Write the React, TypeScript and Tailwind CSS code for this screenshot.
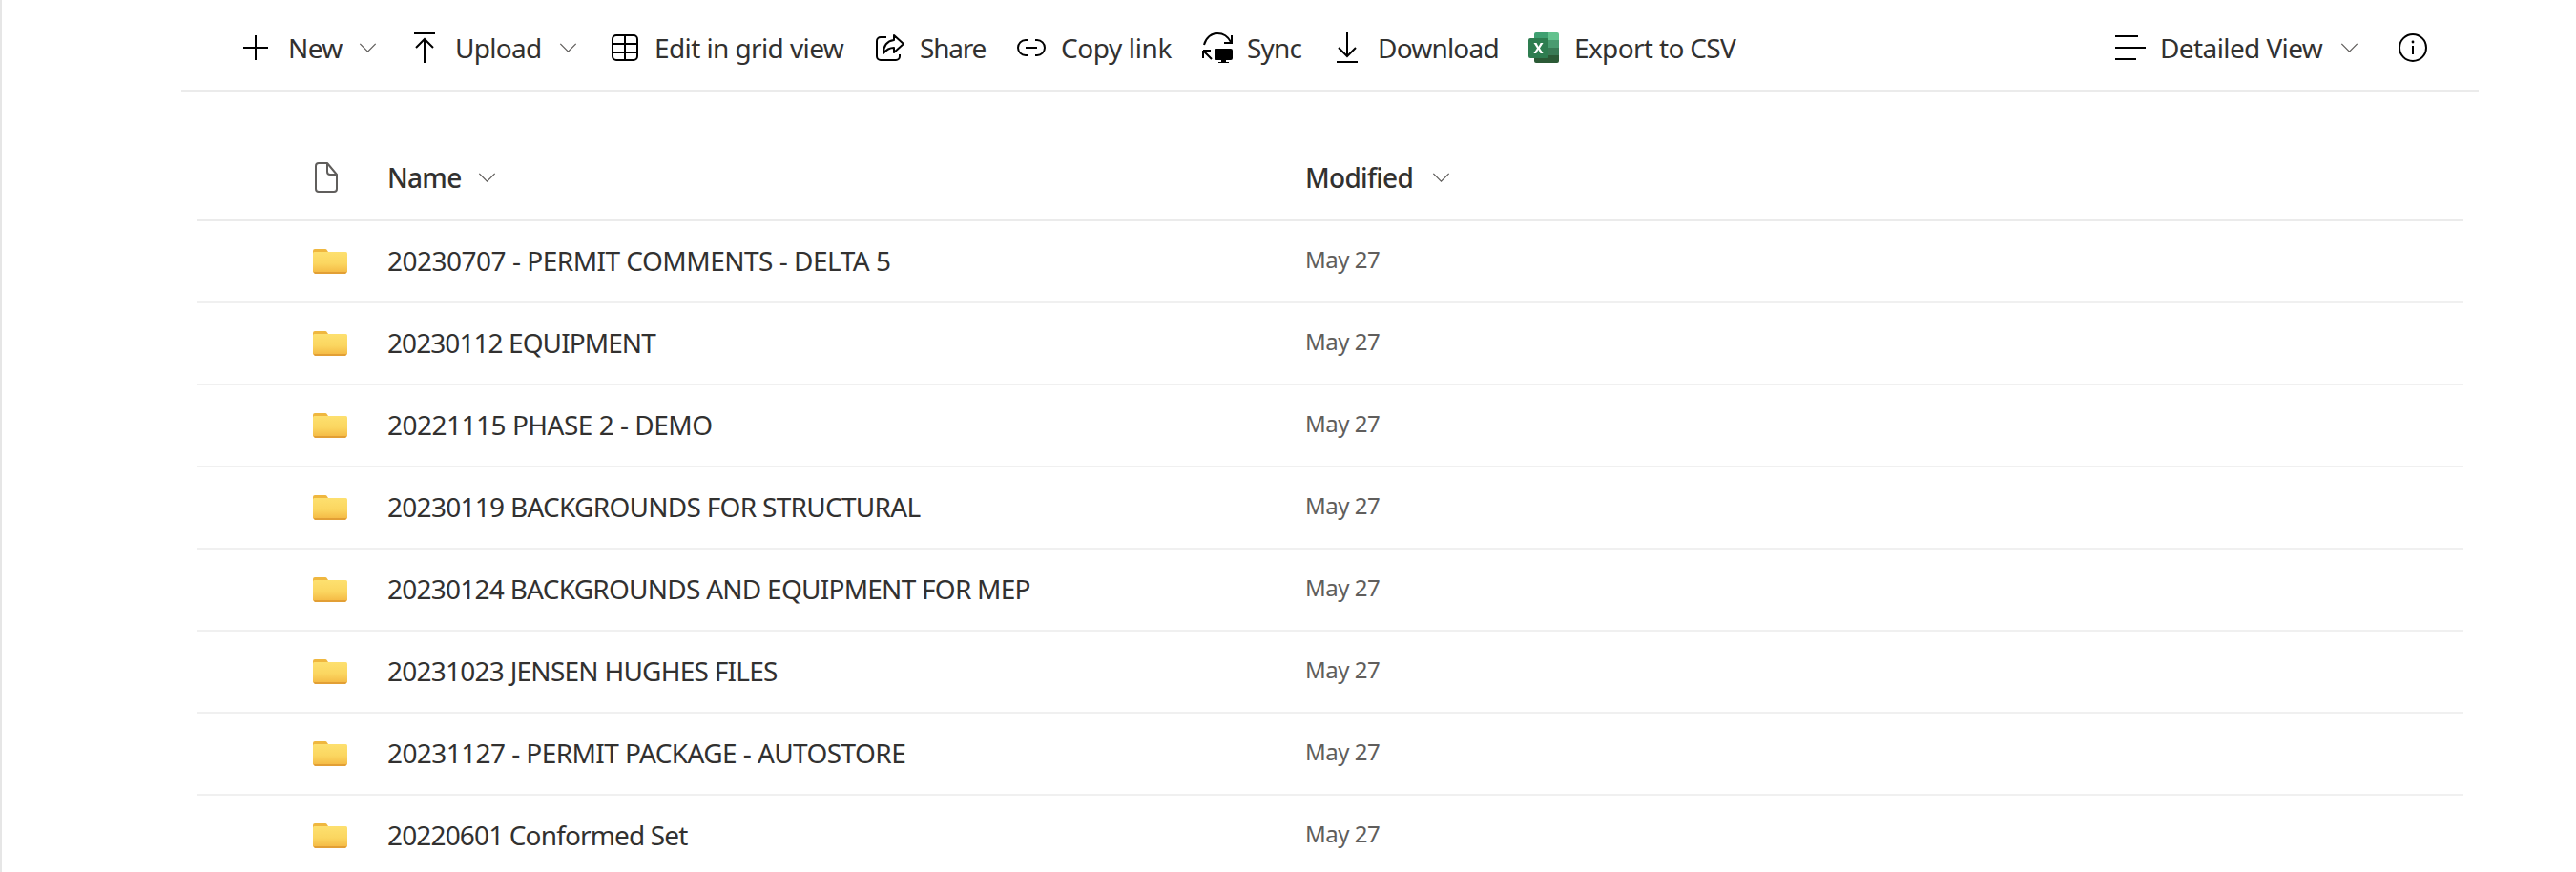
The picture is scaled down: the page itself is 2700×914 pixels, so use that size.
import type { ReactNode } from 'react'

const folders = [
  { name: '20230707 - PERMIT COMMENTS - DELTA 5', tracking: 'tracking-[-0.5px]' },
  { name: '20230112 EQUIPMENT', tracking: 'tracking-[-0.93px]' },
  { name: '20221115 PHASE 2 - DEMO', tracking: 'tracking-[-0.5px]' },
  { name: '20230119 BACKGROUNDS FOR STRUCTURAL', tracking: 'tracking-[-0.72px]' },
  { name: '20230124 BACKGROUNDS AND EQUIPMENT FOR MEP', tracking: 'tracking-[-0.75px]' },
  { name: '20231023 JENSEN HUGHES FILES', tracking: 'tracking-[-0.75px]' },
  { name: '20231127 - PERMIT PACKAGE - AUTOSTORE', tracking: 'tracking-[-0.58px]' },
  { name: '20220601 Conformed Set', tracking: 'tracking-[-0.85px]' },
]

function Chevron({ className }: { className: string }) {
  return (
    <svg viewBox="0 0 20 11" className={className} fill="none" stroke="#605e5c" strokeWidth="1.4">
      <path d="M1 1l9 9 9-9" />
    </svg>
  )
}

function PlusIcon() {
  return (
    <svg viewBox="0 0 26 26" className="h-[26px] w-[26px]" stroke="#000" strokeWidth="2">
      <path d="M13 0v26M0 13h26" />
    </svg>
  )
}

function UploadIcon() {
  return (
    <svg viewBox="0 0 22 32" className="h-[32px] w-[22px]" fill="none" stroke="#000" strokeWidth="2">
      <path d="M0 1h22M11 32V7M2 16l9-9 9 9" />
    </svg>
  )
}

function GridIcon() {
  return (
    <svg viewBox="0 0 28 28" className="h-[28px] w-[28px]" fill="none" stroke="#000" strokeWidth="2">
      <rect x="1" y="1" width="26" height="26" rx="4" />
      <path d="M1 10h26M1 19h26M14 1v26" />
    </svg>
  )
}

function ShareIcon() {
  return (
    <svg viewBox="0 0 30 28" className="h-[28px] w-[30px]" fill="none" stroke="#000" strokeWidth="2">
      <path d="M11 3H5a4 4 0 0 0-4 4v16a4 4 0 0 0 4 4h16a4 4 0 0 0 4-4v-2" />
      <path d="M19 1l10 9-10 9v-5c-5 0-8 2-11 6 0-8 4-13 11-14z" strokeLinejoin="round" />
    </svg>
  )
}

function LinkIcon() {
  return (
    <svg viewBox="0 0 30 18" className="h-[18px] w-[30px]" fill="none" stroke="#000" strokeWidth="2">
      <path d="M11 1H9a8 8 0 0 0 0 16h2M19 1h2a8 8 0 0 1 0 16h-2M9 9h12" />
    </svg>
  )
}

function SyncIcon() {
  return (
    <svg viewBox="0 0 32 32" className="h-[32px] w-[32px]" fill="none" stroke="#000" strokeWidth="2">
      <path d="M2 13C4 5 10 1 16 1c6 0 11 3 14 9" />
      <path d="M31 3v8h-8" />
      <path d="M1 19v8M1 19h8M1 19l9 9" />
      <rect x="13" y="17" width="19" height="12" rx="2" fill="#000" stroke="none" />
      <path d="M20 28h5v3h3v1H17v-1h3z" fill="#000" stroke="none" />
    </svg>
  )
}

function DownloadIcon() {
  return (
    <svg viewBox="0 0 22 32" className="h-[32px] w-[22px]" fill="none" stroke="#000" strokeWidth="2">
      <path d="M11 0v25M2 16l9 9 9-9M0 31h22" />
    </svg>
  )
}

function ExcelIcon() {
  return (
    <svg viewBox="0 0 32 32" className="h-[32px] w-[32px]">
      <path d="M8 0h12v8H6V2a2 2 0 0 1 2-2z" fill="#3fa071" />
      <path d="M20 0h10a2 2 0 0 1 2 2v6H20z" fill="#63c28e" />
      <path d="M6 8h14v8H6z" fill="#2f7f57" />
      <path d="M20 8h12v8H20z" fill="#4a9b70" />
      <path d="M6 16h14v8H6z" fill="#24663f" />
      <path d="M20 16h12v8H20z" fill="#397a55" />
      <path d="M6 24h26v6a2 2 0 0 1-2 2H8a2 2 0 0 1-2-2z" fill="#2b5a36" />
      <rect x="0" y="6" width="21" height="21" rx="2" fill="#2e7d50" />
      <path d="M5.500 11h3l2 4 2.200-4h2.800l-3.500 5.500 3.600 5.500h-3l-2.200-4-2.200 4H5.400l3.600-5.500z" fill="#fff" />
    </svg>
  )
}

function ListIcon() {
  return (
    <svg viewBox="0 0 32 26" className="h-[26px] w-[32px]" stroke="#000" strokeWidth="2">
      <path d="M0 1h24M0 13h32M0 25h22" />
    </svg>
  )
}

function InfoIcon() {
  return (
    <svg viewBox="0 0 30 30" className="h-[30px] w-[30px]" fill="none" stroke="#000" strokeWidth="2">
      <circle cx="15" cy="15" r="14" />
      <path d="M15 13v9" />
      <circle cx="15" cy="9" r="1.400" fill="#000" stroke="none" />
    </svg>
  )
}

function FileIcon() {
  return (
    <svg viewBox="0 0 24 32" className="h-[32px] w-[24px]" fill="none" stroke="#605e5c" strokeWidth="2">
      <path d="M4 1h9l10 12v15a3 3 0 0 1-3 3H4a3 3 0 0 1-3-3V4a3 3 0 0 1 3-3z" strokeLinejoin="round" />
      <path d="M13 1v9a3 3 0 0 0 3 3h7" />
    </svg>
  )
}

function FolderIcon() {
  return (
    <svg viewBox="0 0 36 26" className="h-[26px] w-[36px]">
      <defs>
        <linearGradient id="folder-fill" x1="0" y1="0" x2="0" y2="1">
          <stop offset="0" stopColor="#fde06f" />
          <stop offset="0.55" stopColor="#fbd660" />
          <stop offset="1" stopColor="#f4b944" />
        </linearGradient>
      </defs>
      <path d="M0 2a2 2 0 0 1 2-2h11a2 2 0 0 1 2 1.500L16 3v4H0z" fill="#efb73f" />
      <rect x="0" y="3" width="36" height="22" rx="1.500" fill="url(#folder-fill)" />
      <path d="M1 24h34v.500a1.500 1.500 0 0 1-1.500 1.500h-31A1.500 1.500 0 0 1 1 24.500z" fill="#e29f35" />
    </svg>
  )
}

interface ToolItemProps {
  icon: ReactNode
  label: string
  labelClass: string
  offset: string
  chevronClass?: string
}

function ToolItem({ icon, label, labelClass, offset, chevronClass }: ToolItemProps) {
  return (
    <button className={`flex items-center ${offset}`}>
      {icon}
      <span className={`${labelClass} mt-[1px] whitespace-nowrap text-left text-[28px] leading-none text-[#323130]`}>{label}</span>
      {chevronClass && <Chevron className={`${chevronClass} h-[10px] w-[19px]`} />}
    </button>
  )
}

export default function App() {
  return (
    <div className="h-[914px] w-[2700px] overflow-hidden border-l-2 border-[#e6e6e6] bg-white font-['Noto_Sans',sans-serif]">
      <div className="ml-[188px] flex h-[96px] w-[2408px] items-center border-b-2 border-[#ebebeb] pt-[5px]">
        <ToolItem icon={<PlusIcon />} label="New" labelClass="ml-[21px] w-[57px] tracking-[-0.6px]" offset="ml-[65px]" chevronClass="ml-[17px]" />
        <ToolItem icon={<UploadIcon />} label="Upload" labelClass="ml-[21px] w-[91px] tracking-[-0.7px]" offset="ml-[39px]" chevronClass="ml-[18px]" />
        <ToolItem icon={<GridIcon />} label="Edit in grid view" labelClass="ml-[17px] w-[199px] tracking-[-0.6px]" offset="ml-[36px]" />
        <ToolItem icon={<ShareIcon />} label="Share" labelClass="ml-[16px] w-[70px] tracking-[-1.2px]" offset="ml-[33px]" />
        <ToolItem icon={<LinkIcon />} label="Copy link" labelClass="ml-[16px] w-[117px] tracking-[-0.4px]" offset="ml-[32px]" />
        <ToolItem icon={<SyncIcon />} label="Sync" labelClass="ml-[15px] w-[59px] tracking-[-0.8px]" offset="ml-[31px]" />
        <ToolItem icon={<DownloadIcon />} label="Download" labelClass="ml-[21px] w-[126px] tracking-[-0.8px]" offset="ml-[35px]" />
        <ToolItem icon={<ExcelIcon />} label="Export to CSV" labelClass="ml-[16px] w-[172px] tracking-[-0.65px]" offset="ml-[32px]" />
        <ToolItem icon={<ListIcon />} label="Detailed View" labelClass="ml-[15px] w-[171px] tracking-[-0.6px]" offset="ml-auto" chevronClass="ml-[18px]" />
        <div className="ml-[42px] mr-[54px]">
          <InfoIcon />
        </div>
      </div>

      <div className="ml-[204px] mt-[63px] w-[2376px]">
        <div className="flex h-[73px] items-center border-b-2 border-[#ebebeb] pb-[17px]">
          <div className="ml-[124px] w-[76px]">
            <FileIcon />
          </div>
          <div className="flex w-[962px] items-center">
            <span className="text-[28px] font-medium leading-none tracking-[-0.7px] text-[#323130]">Name</span>
            <Chevron className="ml-[17px] h-[10px] w-[19px]" />
          </div>
          <div className="flex items-center">
            <span className="text-[28px] font-medium leading-none tracking-[-0.7px] text-[#323130]">Modified</span>
            <Chevron className="ml-[20px] h-[10px] w-[19px]" />
          </div>
        </div>
        {folders.map(folder => (
          <div key={folder.name} className="flex h-[86px] items-center border-b-2 border-[#f0f0f0]">
            <div className="ml-[122px] w-[78px]">
              <FolderIcon />
            </div>
            <div className={`mb-[2px] w-[962px] text-[28px] leading-none text-[#323130] ${folder.tracking}`}>{folder.name}</div>
            <div className="mb-[5px] text-[24px] leading-none tracking-[-0.5px] text-[#605e5c]">May 27</div>
          </div>
        ))}
      </div>
    </div>
  )
}
